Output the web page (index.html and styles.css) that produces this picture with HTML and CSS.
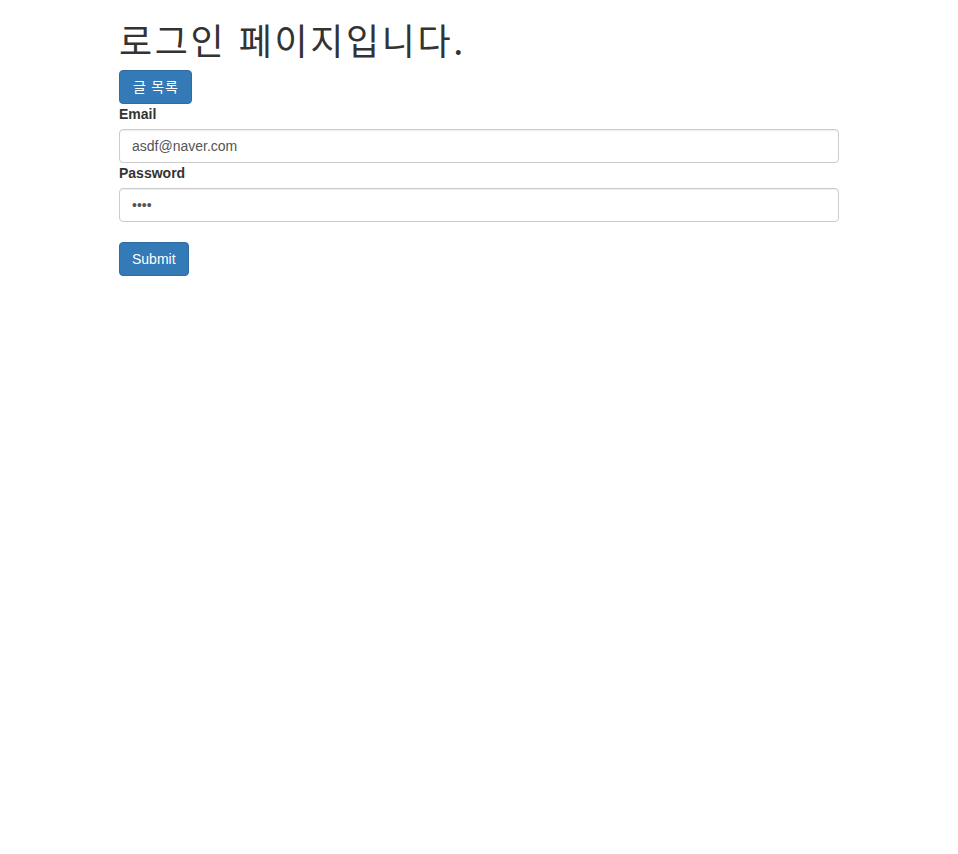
FILE: index.html
```html
<!DOCTYPE html>
<html lang="ko">
<head>
<meta charset="utf-8">
<title>로그인</title>
<link rel="stylesheet" href="styles.css">
</head>
<body>
<div class="container">
  <h1 class="title">로그인 페이지입니다.</h1>
  <button class="btn btn-ko" type="button">글 목록</button>
  <form class="form">
    <label class="label" for="email">Email</label>
    <input class="input" id="email" type="text" value="asdf@naver.com">
    <label class="label" for="pw">Password</label>
    <input class="input" id="pw" type="password" value="asdf">
    <button class="btn submit" type="button">Submit</button>
  </form>
</div>
</body>
</html>
```

FILE: styles.css
```css
* { box-sizing: border-box; }
html, body { margin: 0; padding: 0; background: #fff; }
body {
  font-family: "Liberation Sans", Arial, "Noto Sans CJK KR", sans-serif;
  font-size: 14px;
  line-height: 1.42857143;
  color: #333;
}
.container {
  width: 750px;
  margin: 0 auto;
  padding: 0 15px;
}
.title {
  font-family: "Noto Sans CJK KR", "Liberation Sans", sans-serif;
  font-size: 36px;
  font-weight: 400;
  line-height: 1.1;
  letter-spacing: 2.6px;
  margin: 20px 0 10px;
  color: #333;
}
.btn {
  display: inline-block;
  height: 34px;
  padding: 6px 12px;
  font-family: "Liberation Sans", "Noto Sans CJK KR", sans-serif;
  font-size: 14px;
  line-height: 20px;
  color: #fff;
  background: #337ab7;
  border: 1px solid #2e6da4;
  border-radius: 4px;
  margin: 0;
  vertical-align: top;
}
.btn-ko { letter-spacing: 0.8px; padding: 6px 12px 6px 13px; }
.form { display: flex; flex-direction: column; align-items: flex-start; }
.label {
  display: block;
  font-weight: 700;
  margin: 0 0 5px;
  line-height: 20px;
}
.input {
  display: block;
  width: 100%;
  height: 34px;
  padding: 6px 12px;
  font-family: "Liberation Sans", sans-serif;
  font-size: 14px;
  line-height: 20px;
  color: #555;
  background: #fff;
  border: 1px solid #ccc;
  border-radius: 4px;
  box-shadow: inset 0 1px 1px rgba(0,0,0,.075);
  margin: 0;
}
.submit { margin-top: 20px; }
```
